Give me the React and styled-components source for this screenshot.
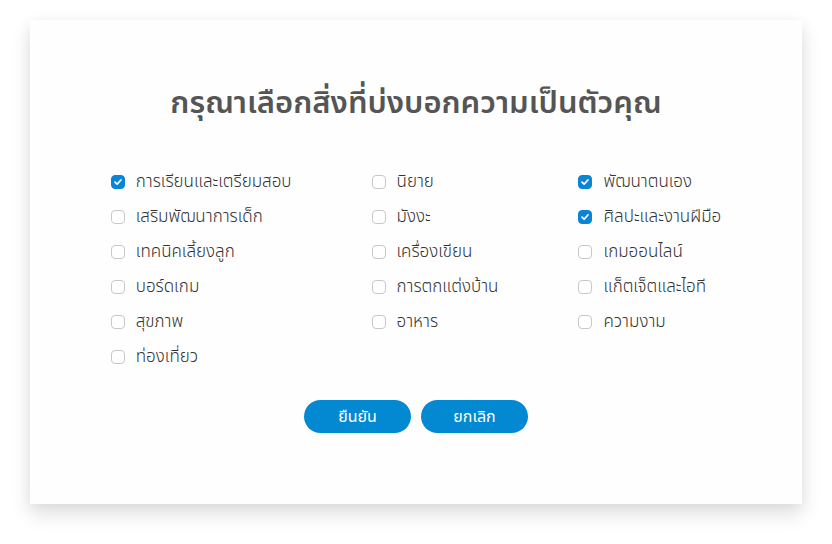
import React, { useState } from 'react'
import styled, { createGlobalStyle } from 'styled-components'

const GlobalStyle = createGlobalStyle`
body {
  margin: 0;
  background: #ffffff;
  font-family: "Noto Sans Thai", "Noto Sans", "DejaVu Sans", sans-serif;
}
`

const Page = styled.div`
padding: 20px 30px 40px;
`

const Card = styled.div`
background: #fefefe;
box-shadow: 0 10px 18px rgba(0, 0, 0, 0.13), 0 0 12px rgba(0, 0, 0, 0.04);
padding: 60px 0 71px;
display: flex;
flex-direction: column;
align-items: center;
`

const Title = styled.h1`
margin: 0;
font-size: 31px;
line-height: 48px;
font-weight: 600;
color: #555555;
`

const Grid = styled.div`
margin-top: 36px;
display: grid;
grid-template-columns: repeat(3, auto);
column-gap: 80px;
`

const Option = styled.label`
height: 35px;
display: flex;
align-items: center;
gap: 11px;
font-size: 17px;
font-weight: 300;
color: #333333;
cursor: pointer;
`

const Box = styled.span`
width: 14px;
height: 14px;
box-sizing: border-box;
border-radius: 4px;
border: 1px solid ${p => (p.checked ? '#0a84d4' : '#c8c8c8')};
background: ${p => (p.checked ? '#0a84d4' : '#ffffff')};
display: flex;
align-items: center;
justify-content: center;
flex-shrink: 0;
`

const Actions = styled.div`
margin-top: 26px;
display: flex;
gap: 10px;
`

const Button = styled.button`
width: 107px;
height: 33px;
border: none;
border-radius: 17px;
background: #0388d2;
color: #ffffff;
font-family: inherit;
font-size: 16px;
font-weight: 400;
cursor: pointer;
`

const items = [
  ['การเรียนและเตรียมสอบ', true],
  ['นิยาย', false],
  ['พัฒนาตนเอง', true],
  ['เสริมพัฒนาการเด็ก', false],
  ['มังงะ', false],
  ['ศิลปะและงานฝีมือ', true],
  ['เทคนิคเลี้ยงลูก', false],
  ['เครื่องเขียน', false],
  ['เกมออนไลน์', false],
  ['บอร์ดเกม', false],
  ['การตกแต่งบ้าน', false],
  ['แก็ตเจ็ตและไอที', false],
  ['สุขภาพ', false],
  ['อาหาร', false],
  ['ความงาม', false],
  ['ท่องเที่ยว', false],
]

const Check = () => (
  <svg width="10" height="10" viewBox="0 0 10 10">
    <path d="M2 5.2 L4.1 7.2 L8 2.9" fill="none" stroke="#fff" strokeWidth="1.7" strokeLinecap="round" strokeLinejoin="round" />
  </svg>
)

const App = () => {
  const [checked, setChecked] = useState(items.map(i => i[1]))

  const toggle = idx => {
    const next = [...checked]
    next[idx] = !next[idx]
    setChecked(next)
  }

  return (
    <Page>
      <GlobalStyle />
      <Card>
        <Title>กรุณาเลือกสิ่งที่บ่งบอกความเป็นตัวคุณ</Title>
        <Grid>
          {items.map(([name], idx) => (
            <Option key={name} onClick={() => toggle(idx)}>
              <Box checked={checked[idx]}>{checked[idx] && <Check />}</Box>
              {name}
            </Option>
          ))}
        </Grid>
        <Actions>
          <Button>ยืนยัน</Button>
          <Button>ยกเลิก</Button>
        </Actions>
      </Card>
    </Page>
  )
}

export default App
